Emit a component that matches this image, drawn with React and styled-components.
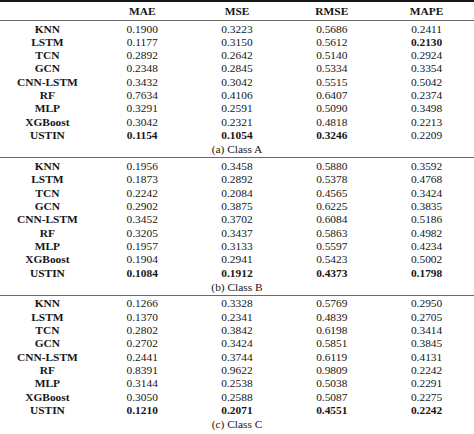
import React from "react";
import styled, { createGlobalStyle } from "styled-components";

const Global = createGlobalStyle`
  html, body { margin: 0; padding: 0; background: #fff; }
  body { width: 474px; }
`;

const Table = styled.div`
  width: 474px;
  border-top: 2px solid #161616;
  font-family: "Liberation Serif", "Times New Roman", serif;
  font-size: 11.4px;
  color: #161616;
`;

const HeaderRow = styled.div`
  display: grid;
  grid-template-columns: repeat(5, 1fr);
  align-items: center;
  height: 18px;
  border-bottom: 1px solid #6a6a6a;
`;

const Section = styled.div`
  padding-top: 1.5px;
  border-bottom: ${(p) => (p.$last ? "none" : "1px solid #6a6a6a")};
`;

const Row = styled.div`
  display: grid;
  grid-template-columns: repeat(5, 1fr);
  align-items: center;
  height: 13.33px;
  line-height: 13.33px;
`;

const Cell = styled.div`
  text-align: center;
  font-weight: ${(p) => (p.$bold ? 700 : 400)};
  white-space: nowrap;
`;

const Caption = styled.div`
  text-align: center;
  height: 15px;
  line-height: 12px;
  padding-top: 1px;
  box-sizing: border-box;
`;

const sections = [
  {
    caption: "(a) Class A",
    rows: [
      ["KNN", "0.1900", "0.3223", "0.5686", "0.2411"],
      ["LSTM", "0.1177", "0.3150", "0.5612", "*0.2130"],
      ["TCN", "0.2892", "0.2642", "0.5140", "0.2924"],
      ["GCN", "0.2348", "0.2845", "0.5334", "0.3354"],
      ["CNN-LSTM", "0.3432", "0.3042", "0.5515", "0.5042"],
      ["RF", "0.7634", "0.4106", "0.6407", "0.2374"],
      ["MLP", "0.3291", "0.2591", "0.5090", "0.3498"],
      ["XGBoost", "0.3042", "0.2321", "0.4818", "0.2213"],
      ["USTIN", "*0.1154", "*0.1054", "*0.3246", "0.2209"],
    ],
  },
  {
    caption: "(b) Class B",
    rows: [
      ["KNN", "0.1956", "0.3458", "0.5880", "0.3592"],
      ["LSTM", "0.1873", "0.2892", "0.5378", "0.4768"],
      ["TCN", "0.2242", "0.2084", "0.4565", "0.3424"],
      ["GCN", "0.2902", "0.3875", "0.6225", "0.3835"],
      ["CNN-LSTM", "0.3452", "0.3702", "0.6084", "0.5186"],
      ["RF", "0.3205", "0.3437", "0.5863", "0.4982"],
      ["MLP", "0.1957", "0.3133", "0.5597", "0.4234"],
      ["XGBoost", "0.1904", "0.2941", "0.5423", "0.5002"],
      ["USTIN", "*0.1084", "*0.1912", "*0.4373", "*0.1798"],
    ],
  },
  {
    caption: "(c) Class C",
    rows: [
      ["KNN", "0.1266", "0.3328", "0.5769", "0.2950"],
      ["LSTM", "0.1370", "0.2341", "0.4839", "0.2705"],
      ["TCN", "0.2802", "0.3842", "0.6198", "0.3414"],
      ["GCN", "0.2702", "0.3424", "0.5851", "0.3845"],
      ["CNN-LSTM", "0.2441", "0.3744", "0.6119", "0.4131"],
      ["RF", "0.8391", "0.9622", "0.9809", "0.2242"],
      ["MLP", "0.3144", "0.2538", "0.5038", "0.2291"],
      ["XGBoost", "0.3050", "0.2588", "0.5087", "0.2275"],
      ["USTIN", "*0.1210", "*0.2071", "*0.4551", "*0.2242"],
    ],
  },
];

const headers = ["", "MAE", "MSE", "RMSE", "MAPE"];

export default function App() {
  return (
    <>
      <Global />
      <Table>
        <HeaderRow>
          {headers.map((h, i) => (
            <Cell key={i} $bold>
              {h}
            </Cell>
          ))}
        </HeaderRow>
        {sections.map((s, si) => (
          <Section key={s.caption} $last={si === sections.length - 1}>
            {s.rows.map((r) => (
              <Row key={r[0]}>
                {r.map((v, i) => {
                  const bold = i === 0 || v.startsWith("*");
                  return (
                    <Cell key={i} $bold={bold}>
                      {v.replace("*", "")}
                    </Cell>
                  );
                })}
              </Row>
            ))}
            <Caption>{s.caption}</Caption>
          </Section>
        ))}
      </Table>
    </>
  );
}
